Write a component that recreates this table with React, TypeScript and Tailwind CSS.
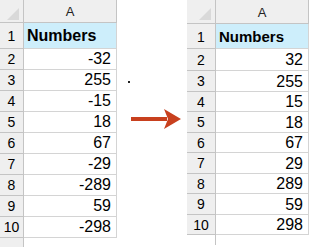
const leftValues = ['-32', '255', '-15', '18', '67', '-29', '-289', '59', '-298']
const rightValues = ['32', '255', '15', '18', '67', '29', '289', '59', '298']

function Corner() {
  return (
    <div className="relative h-full w-full">
      <svg className="absolute right-[4px] top-[8px]" width="12" height="12" viewBox="0 0 12 12">
        <polygon points="12,0 12,12 0,12" fill="#d9d9d9" />
      </svg>
    </div>
  )
}

type SheetProps = {
  values: string[]
  rowHeights: number[]
  headW: string
  titleSize: string
  stubGray: boolean
}

function Sheet({ values, rowHeights, headW, titleSize, stubGray }: SheetProps) {
  return (
    <div className="flex flex-col" style={{ fontFamily: '"Liberation Sans", Arial, sans-serif' }}>
      <div className="flex h-[24px]">
        <div className={`${headW} shrink-0 border-r border-b border-[#c4c4c4] bg-[#efefef]`}>
          <Corner />
        </div>
        <div className="flex w-[93px] shrink-0 items-center justify-center border-r border-b border-[#c4c4c4] bg-[#efefef] pt-[2px] text-[13px] text-[#222]">
          A
        </div>
      </div>
      <div className="flex" style={{ height: rowHeights[0] }}>
        <div className={`${headW} flex shrink-0 items-center justify-center border-r border-b border-[#c4c4c4] bg-[#efefef] pt-[3px] text-[14px] text-black`}>
          1
        </div>
        <div className={`${titleSize} flex w-[93px] shrink-0 items-center border-r border-b border-[#d4d4d4] bg-[#cdeefb] pl-[3px] pt-[2px] font-bold text-black`}>
          Numbers
        </div>
      </div>
      {values.map((v, i) => (
        <div key={i} className="flex" style={{ height: rowHeights[i + 1] }}>
          <div className={`${headW} flex shrink-0 items-center justify-center border-r border-b border-[#c4c4c4] bg-[#efefef] pt-[1px] text-[14px] text-black`}>
            {i + 2}
          </div>
          <div className="flex w-[93px] shrink-0 items-center justify-end border-r border-b border-[#d4d4d4] bg-white pr-[5px] pt-[1px] text-[16px] text-black">
            {v}
          </div>
        </div>
      ))}
      <div className="flex h-[10px]">
        <div className={stubGray ? `${headW} border-r border-[#c4c4c4] bg-[#efefef]` : `${headW} border-r border-[#c4c4c4] bg-white`} />
      </div>
    </div>
  )
}

export default function App() {
  return (
    <div className="flex h-[247px] w-[314px] overflow-hidden bg-white">
      <Sheet
        values={leftValues}
        rowHeights={[26, 21, 21, 21, 21, 21, 21, 21, 21, 21]}
        headW="w-[24px]"
        titleSize="text-[16px]"
        stubGray
      />
      <div className="w-[70px] shrink-0">
        <svg className="mt-[78px]" width="70" height="60" viewBox="0 0 70 60">
          <rect x="11" y="3" width="2" height="2" fill="#222" />
          <rect x="14" y="39" width="36" height="4" fill="#c8401e" />
          <polygon points="47,31 64,41 47,51 51,41" fill="#c8401e" />
        </svg>
      </div>
      <Sheet
        values={rightValues}
        rowHeights={[25, 22, 21, 20, 21, 20, 21, 20, 21, 20]}
        headW="w-[29px]"
        titleSize="text-[15px]"
        stubGray={false}
      />
    </div>
  )
}
